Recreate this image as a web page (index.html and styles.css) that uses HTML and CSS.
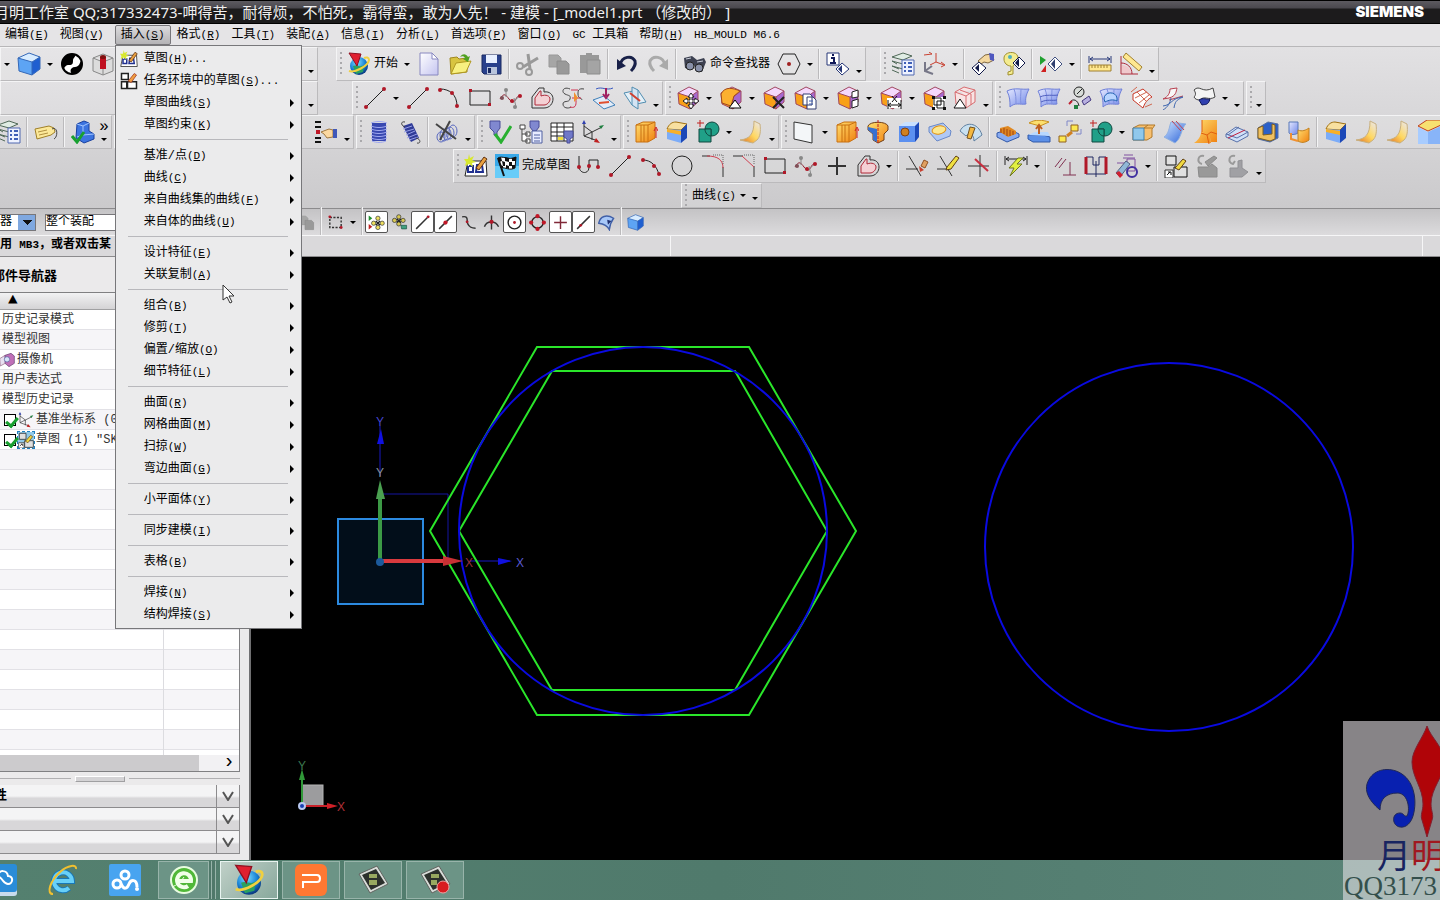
FILE: index.html
```
<!DOCTYPE html>
<html lang="zh-CN">
  <head>
    <meta charset="utf-8" />
    <title>建模 - [_model1.prt （修改的） ]</title>
    <link rel="stylesheet" href="styles.css">
  </head>

  <body>
    <!-- icon sprite -->
    <svg class="sprite" aria-hidden="true">
      <defs>
        <linearGradient id="g-blue" x1="0" y1="0" x2="1" y2="1"><stop offset="0" stop-color="#cfe4ff" /><stop offset="1" stop-color="#2a62d8" /></linearGradient>
        <linearGradient id="g-lilac" x1="0" y1="0" x2="1" y2="1"><stop offset="0" stop-color="#e4e8ff" /><stop offset="1" stop-color="#6f86e8" /></linearGradient>
        <linearGradient id="g-orange" x1="0" y1="0" x2="1" y2="1"><stop offset="0" stop-color="#ffe070" /><stop offset="1" stop-color="#f08010" /></linearGradient>
        <linearGradient id="g-sheet" x1="0" y1="1" x2="1" y2="0"><stop offset="0" stop-color="#e06a20" /><stop offset="0.5" stop-color="#ffd860" /><stop offset="1" stop-color="#e8e8f8" /></linearGradient>
        <linearGradient id="g-doc" x1="0" y1="0" x2="1" y2="1"><stop offset="0" stop-color="#ffffff" /><stop offset="1" stop-color="#c4c4f0" /></linearGradient>
        <radialGradient id="g-globe" cx="0.4" cy="0.3" r="0.7"><stop offset="0" stop-color="#7fe0ff" /><stop offset="0.6" stop-color="#1b86d8" /><stop offset="1" stop-color="#0a3a80" /></radialGradient>
      </defs>

      <symbol id="cube" viewBox="0 0 24 24"><path d="M1 6 12 1l11 4-8 5z" fill="#d8ecff" /><path d="M1 6l14 4v13L2 19z" fill="#5da4f4" /><path d="M15 10l8-5v12l-8 6z" fill="#1f5fd0" /><path d="M1 6 12 1l11 4v12l-8 6-13-4zM1 6l14 4 8-5M15 10v13" fill="none" stroke="#3468b8" /></symbol>
      <symbol id="shade" viewBox="0 0 24 24"><circle cx="12" cy="12" r="10" fill="#fff" stroke="#000" stroke-width="2" /><path d="M4 18A10 10 0 0 1 14 2c4 1-1 4-1 6 0 3 0 5-4 5-3 0-5 2-5 5zM12 22c-3-3-1-7 3-7s5-4 6-7c2 7-1 13-9 14z" fill="#000" /></symbol>
      <symbol id="cyl" viewBox="0 0 24 24"><path d="M2 6l10-4 10 4v13l-10 4-10-4zM2 6l10 4 10-4M12 10v13" fill="#dcdcdc" stroke="#888" /><path d="M9 5h6v12H9z" fill="#c01020" /><ellipse cx="12" cy="5" rx="3" ry="2" fill="#801010" /></symbol>
      <symbol id="nx" viewBox="0 0 24 24"><circle cx="12" cy="14" r="9" fill="url(#g-globe)" /><path d="M6 14c4-2 7 2 11-1l-1 7-7 2z" fill="#2aa060" /><path d="M2 19c6 2 19-5 20-11 0-3-3-3-5-2" fill="none" stroke="#f0d040" stroke-width="2" /><path d="M2 1l12 1-4 12z" fill="#e02030" stroke="#901020" /></symbol>
      <symbol id="new" viewBox="0 0 24 24"><path d="M3 1h12l6 6v16H3z" fill="url(#g-doc)" stroke="#8888c0" /><path d="M15 1v6h6z" fill="#fff" stroke="#8888c0" /></symbol>
      <symbol id="open" viewBox="0 0 24 24"><path d="M2 6l7-1 2 2 8-1v14L3 22z" fill="#d8c440" stroke="#a08820" /><path d="M3 22l5-11 15-2-5 11z" fill="#f8f080" stroke="#b09820" /><path d="M12 5c3-4 6-3 8 0l2-1-2 6-5-3 2-1c-1-2-3-2-5-1z" fill="#50a020" /></symbol>
      <symbol id="save" viewBox="0 0 24 24"><path d="M3 3h19v19H5l-2-2z" fill="#28408c" stroke="#182860" /><path d="M7 3h11v8H7z" fill="#e8f0ff" /><path d="M8 15h10v7H8z" fill="#b8c4dc" /><path d="M9 16h3v5H9z" fill="#182860" /></symbol>
      <symbol id="cut" viewBox="0 0 24 24"><path d="M22 6 7 15M12 2l2 15" stroke="#999" stroke-width="3" /><circle cx="4" cy="14" r="3" fill="none" stroke="#999" stroke-width="2" /><circle cx="13" cy="20" r="3" fill="none" stroke="#999" stroke-width="2" /></symbol>
      <symbol id="copy" viewBox="0 0 24 24"><path d="M2 3h9l3 3v9H2z" fill="#a6a6a6" stroke="#999" /><path d="M10 9h9l3 3v10H10z" fill="#999" stroke="#8c8c8c" /></symbol>
      <symbol id="paste" viewBox="0 0 24 24"><path d="M2 3h6V1h6v2h7v18H2z" fill="#999" /><path d="M9 8h13v14H9z" fill="#a4a4a4" stroke="#8c8c8c" /></symbol>
      <symbol id="undo" viewBox="0 0 24 24"><path d="M5 13C7 4 17 3 20 9c1 4-1 7-4 10" fill="none" stroke="#182048" stroke-width="3" /><path d="M2 7v11l9-4z" fill="#182048" /></symbol>
      <symbol id="redo" viewBox="0 0 24 24"><path d="M19 13C17 4 7 3 4 9c-1 4 1 7 4 10" fill="none" stroke="#aaa" stroke-width="3" /><path d="M22 7v11l-9-4z" fill="#aaa" /></symbol>
      <symbol id="find" viewBox="0 0 24 24"><path d="M1 6l8-2 5 4 7-2 2 4-4 10-6-1-2-6-4 4-5-1z" fill="#3c4050" /><circle cx="7" cy="14" r="4" fill="#8890a8" stroke="#222" /><circle cx="16" cy="16" r="4" fill="#8890a8" stroke="#222" /><path d="M3 7l5-1M14 10l6-1" stroke="#c8ccd8" /></symbol>
      <symbol id="hexagon" viewBox="0 0 24 24"><path d="M6 2h12l5 10-5 10H6L1 12z" fill="none" stroke="#222" /><circle cx="12" cy="12" r="2" fill="#a02020" /></symbol>
      <symbol id="info" viewBox="0 0 24 24"><path d="M1 1h12v12H1z" fill="#fff" stroke="#283878" /><path d="M5 6h3v5M4 11h6M6 3h2" stroke="#101858" stroke-width="2" fill="none" /><path d="M16 11l7 6-7 6-6-6z" fill="#fff" stroke="#283878" /><path d="M16 13v8l-4-4z" fill="#283878" /></symbol>
      <symbol id="layers" viewBox="0 0 24 24"><path d="M1 5l11-4 9 3-9 4zM1 9l5 3M1 14l7 3M1 18l7 3" fill="#e0ece4" stroke="#506858" /><path d="M1 9l11 3 8-3M1 14l11 3" fill="none" stroke="#506858" /><path d="M11 8h12v15H11z" fill="#eef2ff" stroke="#5068b0" /><path d="M13 11h2M17 11h4M13 15h2M17 15h4M13 19h2M17 19h4" stroke="#4060b8" stroke-width="2" /></symbol>
      <symbol id="wcs" viewBox="0 0 24 24"><path d="M14 1v9l8 3M14 10l-6 3M2 3l8-1-3-2M19 10l4 3-4 2" fill="none" stroke="#c84030" /><path d="M3 10v9l8 3M3 19l7-5" fill="none" stroke="#777788" stroke-width="2" /></symbol>
      <symbol id="hand" viewBox="0 0 24 24"><path d="M7 9l7-6 6-1 3 6-6 3-4-1-3 2z" fill="#f4d8a0" stroke="#806840" /><path d="M18 1l5 1v7l-4-1z" fill="#5058c0" /><path d="M8 10l7 6-7 7-7-7z" fill="#fff" stroke="#101848" /><path d="M8 12v8l-4-4z" fill="#101848" /></symbol>
      <symbol id="key" viewBox="0 0 24 24"><path d="M2 7c-1-8 14-9 14-1 0 5-4 6-5 8v8l-5 1v-3l3-1v-5C5 14 2 11 2 7z" fill="#f4ec90" stroke="#a09030" /><circle cx="8" cy="5" r="2" fill="#50b0c0" /><path d="M17 5l6 6-6 6-6-6z" fill="#fff" stroke="#101848" /><path d="M17 6v9l-4-4z" fill="#101848" /></symbol>
      <symbol id="reverse" viewBox="0 0 24 24"><path d="M1 4v9l6-5z" fill="#20a030" /><path d="M2 20l5-7v7z" fill="#d02020" /><path d="M16 5l7 7-7 7-7-7z" fill="#fff" stroke="#405080" /><path d="M16 7v10l-4-5z" fill="#304070" /></symbol>
      <symbol id="ruler" viewBox="0 0 24 24"><path d="M1 13h22v6H1z" fill="#ffe890" stroke="#a08030" /><path d="M4 13v3M7 13v3M10 13v3M13 13v3M16 13v3M19 13v3" stroke="#a08030" /><path d="M1 4v7M23 4v7M2 7h20M5 5L2 7l3 2M19 5l3 2-3 2" stroke="#283878" fill="none" /></symbol>
      <symbol id="angle" viewBox="0 0 24 24"><path d="M2 4v18h17M2 11c6 0 11 4 11 11" fill="none" stroke="#b02838" /><path d="M3 13c5 0 9 4 9 8H3z" fill="#f0c8cc" /><path d="M7 1l16 14-3 4L4 5z" fill="#ffe890" stroke="#a08030" /></symbol>

      <symbol id="line" viewBox="0 0 24 24"><path d="M3 21 21 3" stroke="#222" /><circle cx="3" cy="21" r="2" fill="#b01828" /><circle cx="21" cy="3" r="2" fill="#b01828" /></symbol>
      <symbol id="arc" viewBox="0 0 24 24"><path d="M3 3c10 0 17 6 17 17" fill="none" stroke="#222" /><circle cx="3" cy="4" r="2" fill="#b01828" /><circle cx="15" cy="7" r="2" fill="#b01828" /><circle cx="20" cy="20" r="2" fill="#b01828" /></symbol>
      <symbol id="rect" viewBox="0 0 24 24"><path d="M2 5h20v14H2z" fill="none" stroke="#222" /><path d="M1 3h3v3H1zM20 17h3v3h-3z" fill="#b01828" /></symbol>
      <symbol id="spline" viewBox="0 0 24 24"><path d="M1 13C5 6 7 9 10 13s5 4 7 0 3-3 5-3" fill="none" stroke="#902030" /><path d="M7 3v8M15 12l2 9M16 14l6-5" stroke="#888" /><circle cx="7" cy="4" r="2" fill="#888" /><circle cx="16" cy="21" r="2" fill="#888" /><circle cx="13" cy="15" r="2" fill="#b01828" /><circle cx="3" cy="12" r="2" fill="#805058" /><circle cx="21" cy="10" r="2" fill="#b01828" /></symbol>
      <symbol id="offset" viewBox="0 0 24 24"><path d="M2 22V11l7-9h5v4c6-1 9 3 9 7s-3 9-9 9z" fill="none" stroke="#333" /><path d="M5 19v-7l5-7h1v5c5-2 9 0 9 3s-3 6-6 6z" fill="#f4d0d4" stroke="#b02838" /></symbol>
      <symbol id="bridge" viewBox="0 0 24 24"><path d="M9 3C2 0 0 6 4 8s6 1 5 5-7 1-7 5 5 5 8 3M23 3c-6-1-6 2-6 5 0 5 4 4 4 6" fill="none" stroke="#444" /><path d="M10 4h7M9 21c7 2 6-4 6-8M11 12h9" fill="none" stroke="#d03050" /><path d="M13 6l4 6-4 4z" fill="#f09030" /></symbol>
      <symbol id="project" viewBox="0 0 24 24"><path d="M1 14l11-4 11 9-11 4z" fill="#e4ecf8" stroke="#4080b8" /><path d="M7 17l10-1" stroke="#e05030" stroke-width="2" /><path d="M4 3c6-3 10 2 17-1" fill="none" stroke="#3858c0" /><path d="M14 2v8M11 8l3 4 3-4" fill="none" stroke="#a02060" stroke-width="2" /></symbol>
      <symbol id="planes" viewBox="0 0 24 24"><path d="M1 7l14-3 8 12-14 3z" fill="#e4f0f8" stroke="#508cb0" /><path d="M9 1l6 3v19l-6-4z" fill="#d4e4f4" stroke="#508cb0" /><path d="M7 7l10 8" stroke="#d04030" stroke-width="2" /></symbol>

      <symbol id="cubeo" viewBox="0 0 24 24"><path d="M2 7l11-6 9 4-8 6z" fill="#f4d8fc" /><path d="M2 7l12 4v12L3 18z" fill="#f8a018" /><path d="M14 11l8-6v11l-8 7z" fill="#a868d0" /><path d="M2 7l11-6 9 4v11l-8 7-11-5zM2 7l12 4 8-6M14 11v12" fill="none" stroke="#a04860" /></symbol>
      <symbol id="c-move" viewBox="0 0 24 24"><use href="#cubeo" /><path d="M15 7l3 4h-2v3h3v-2l4 3-4 3v-2h-3v3h2l-3 4-3-4h2v-3h-3v2l-4-3 4-3v2h3v-3h-2z" fill="#fff" stroke="#222" /></symbol>
      <symbol id="c-edit" viewBox="0 0 24 24"><use href="#cubeo" /><path d="M2 8C6 0 14 2 21 5l-6 5-3 10-9-3z" fill="#fcb030" stroke="#a04820" /><path d="M16 14l6 8H10z" fill="#fff" stroke="#000" /></symbol>
      <symbol id="c-del" viewBox="0 0 24 24"><use href="#cubeo" /><path d="M11 11l11 11M22 11 11 22" stroke="#222" stroke-width="2" /></symbol>
      <symbol id="c-copy" viewBox="0 0 24 24"><use href="#cubeo" /><path d="M10 8h7l2 2v9h-9zM14 11h6l3 3v9h-9z" fill="#fff" stroke="#333c70" /><path d="M16 15h4M16 18h4" stroke="#4060b0" /></symbol>
      <symbol id="c-pat" viewBox="0 0 24 24"><use href="#cubeo" /><path d="M16 6l6-2v7l-6 1zM16 15l6-2v7l-6 2z" fill="#fff" stroke="#222" /></symbol>
      <symbol id="c-dim" viewBox="0 0 24 24"><use href="#cubeo" /><path d="M8 12h14v10H8z" fill="#fff" /><path d="M9 14v9M22 14v9M9 19h13M12 17l-3 2 3 2M19 17l3 2-3 2M13 10l5 6M18 10l-5 6" fill="none" stroke="#111" /></symbol>
      <symbol id="c-group" viewBox="0 0 24 24"><use href="#cubeo" /><path d="M11 11h12v12H11z" fill="#fff" /><path d="M12 12h7v7h-7zM15 15h7v7h-7z" fill="none" stroke="#111" /><path d="M10 10h3v3h-3zM21 21h3v3h-3zM10 21h3v3h-3zM21 10h3v3h-3z" fill="#111" /></symbol>
      <symbol id="c-wire" viewBox="0 0 24 24"><path d="M2 6l9-5 11 3v12l-9 6L3 18zM2 6l11 4 9-6M13 10v12M7 4l11 4v11" fill="#f8e4e4" stroke="#d86c70" /><path d="M7 13l6 9H1z" fill="#fff" stroke="#111" /></symbol>
      <symbol id="surf1" viewBox="0 0 24 24"><path d="M1 5c8-4 14-1 22-2-3 6-4 10-3 15-6 1-11-2-16 3 0-6 0-10-3-16z" fill="url(#g-lilac)" stroke="#7080d8" /><path d="M8 3c2 5 2 10 2 15M15 3c0 5-1 10 0 15" fill="none" stroke="#8090e0" /></symbol>
      <symbol id="surf2" viewBox="0 0 24 24"><use href="#surf1" /><path d="M3 11c6-3 13-1 18-2M4 16c6-3 11-1 16-2" fill="none" stroke="#5060c0" /></symbol>
      <symbol id="analyse" viewBox="0 0 24 24"><circle cx="11" cy="6" r="5" fill="#d8dcd8" stroke="#222" /><path d="M9 8l5-5" stroke="#222" /><path d="M2 16c3-4 8-2 9 4" fill="none" stroke="#222" /><path d="M6 19h4v4H6z" fill="#208040" /><path d="M1 18l3-3" stroke="#c02030" stroke-width="2" /><path d="M14 15l7-5 2 4-7 5z" fill="#b8b0e0" stroke="#443880" /></symbol>
      <symbol id="patch" viewBox="0 0 24 24"><use href="#surf1" /><path d="M5 13c0-8 12-8 13-1v3c-4-2-8-1-12 1z" fill="#b8d4ff" stroke="#2060b0" /></symbol>
      <symbol id="mesh" viewBox="0 0 24 24"><path d="M3 8l10-5 9 8c-4 2-7 5-9 11L3 14z" fill="#fff" stroke="#c83828" /><path d="M7 6l10 10M5 12l12-6M9 17l10-8M1 6l6-5M15 21l7-3" fill="none" stroke="#d06850" /></symbol>
      <symbol id="sweep" viewBox="0 0 24 24"><path d="M9 3l7-1c-1 4-1 8-8 10l-6 1c5-2 7-6 7-10zM8 14l14-4" fill="#f8f8f8" stroke="#b84050" /><path d="M2 20c9-1 8-8 20-9-7 3-8 5-9 11M10 12c-1 5-3 9-8 12" fill="none" stroke="#4068b0" /></symbol>
      <symbol id="ribbon" viewBox="0 0 24 24"><path d="M2 4c6-6 8 4 19-2l2 9c-6 4-11-2-15 3-3 0-5-1-6-3 2-2 2-4 0-7z" fill="#f4f4f4" stroke="#444" /><path d="M7 14c4-3 8 0 11-1-2 7-5 5-8 6z" fill="#3040b0" stroke="#101858" /></symbol>

      <symbol id="tag" viewBox="0 0 24 24"><path d="M1 9l14-3 5 2 1 4-4 3-14 4z" fill="#fce898" stroke="#a08028" /><path d="M4 12l9-2M5 15l9-2" stroke="#b09040" /><path d="M18 9c6-3 6 8 2 10" fill="none" stroke="#444" /></symbol>
      <symbol id="check-block" viewBox="0 0 24 24"><path d="M6 4l7-3 5 2v8l5 3v5l-10 4-8-5z" fill="#3c74e0" stroke="#1840a0" /><path d="M6 4l6 2v9l-6 2M12 6l6-3M12 15l11-1" fill="none" stroke="#a0c4ff" /><path d="M1 16l5 6 7-10" fill="none" stroke="#18a030" stroke-width="3" /></symbol>
      <symbol id="pick" viewBox="0 0 24 24"><path d="M1 2h6M1 7h6M1 18h6M1 22h6" stroke="#111" stroke-width="2" /><path d="M2 10h4v4H2z" fill="#c01828" /><path d="M7 12l8-3 4 1v7l-6 1-3-4z" fill="#fbd8a0" stroke="#a07840" /><path d="M19 9h4v9h-4z" fill="#4058b8" /></symbol>
      <symbol id="coil" viewBox="0 0 24 24"><path d="M5 3h14v18H5z" fill="#3848b0" /><path d="M4 3c5-2 11-2 16 0M4 6c5 2 11 2 16 0M4 9c5 2 11 2 16 0M4 12c5 2 11 2 16 0M4 15c5 2 11 2 16 0M4 18c5 2 11 2 16 0M5 21c5 2 9 2 14 0" fill="none" stroke="#a0a8f0" /></symbol>
      <symbol id="spring" viewBox="0 0 24 24"><path d="M5 6l9-3 7 15-8 4z" fill="#303c98" /><path d="M5 9l9-3M6 12l10-3M8 15l9-4M9 18l10-4M11 20l9-3" stroke="#98a0e8" /><path d="M7 7C2 5 3 1 7 2M18 18c5 1 5 6 1 5" fill="none" stroke="#444" /></symbol>
      <symbol id="nospring" viewBox="0 0 24 24"><g fill="none" stroke="#5868c0"><ellipse cx="6" cy="17" rx="4" ry="5" /><ellipse cx="9" cy="15" rx="4" ry="6" /><ellipse cx="12" cy="14" rx="4" ry="6" /><ellipse cx="15" cy="13" rx="4" ry="6" /><ellipse cx="18" cy="11" rx="4" ry="6" /></g><path d="M1 4l20 15M15 1L5 20" stroke="#444" stroke-width="2" /></symbol>
      <symbol id="vcheck" viewBox="0 0 24 24"><path d="M2 1h10v7l-3 4v3H6v-3L2 8z" fill="#8088d0" stroke="#484c98" /><path d="M7 14l6 8L23 6" fill="none" stroke="#28b030" stroke-width="3" /></symbol>
      <symbol id="vtree" viewBox="0 0 24 24"><path d="M11 1h9v6l-3 4h-3l-3-4z" fill="#8088d0" stroke="#484c98" /><path d="M13 11h10v12H13z" fill="#e8ecff" stroke="#5060a0" /><path d="M1 5h5v4H1zM3 9v12h6M3 14h6M7 12h4v4H7zM7 19h4v4H7z" fill="#fff" stroke="#444" /><path d="M15 15h6M15 18h6M15 21h6" stroke="#5060a0" /></symbol>
      <symbol id="vtable" viewBox="0 0 24 24"><path d="M1 3h22v18H1z" fill="#fff" /><path d="M1 3h22v18H1zM1 7h22M1 12h22M1 16h22M7 3v18M14 3v18" fill="none" stroke="#222" /><path d="M14 11h9v6l-3 2v4h-3v-4l-3-2z" fill="#7078c8" stroke="#484c98" /><path d="M8 17h5v3H8z" fill="#f0e040" /></symbol>
      <symbol id="axes" viewBox="0 0 24 24"><path d="M3 2v14l14 5M3 16l18-9M3 6l8 6v8" fill="none" stroke="#333" /><path d="M1 4l2-4 2 4z" fill="#3040b0" /><path d="M18 6l5-1-3 4z" fill="#208040" /><path d="M15 18l4 5-6-1z" fill="#c02020" /></symbol>
      <symbol id="extrude" viewBox="0 0 24 24"><path d="M2 5l7-3h12v16l-7 4H2z" fill="url(#g-orange)" stroke="#c87010" /><path d="M2 5h12v17M14 5l7-3M7 5v17M10 5v17" fill="none" stroke="#c87010" /><path d="M22 18V9M20 11l2-4 2 4" stroke="#d02020" fill="none" /></symbol>
      <symbol id="block" viewBox="0 0 24 24"><path d="M2 9c2-5 5-7 9-7l11 2-6 6z" fill="#f8e0a0" stroke="#a07010" /><path d="M2 9l14 1v13L2 19z" fill="#7cacf8" /><path d="M16 10l6-6v14l-6 5z" fill="#1c48b8" /><path d="M2 9l14 2v4L2 12z" fill="#f8b028" /></symbol>
      <symbol id="unite" viewBox="0 0 24 24"><circle cx="16" cy="9" r="7" fill="#20a088" stroke="#104840" /><path d="M3 9h12v13H3z" fill="#20a088" stroke="#104840" /><path d="M15 9v7c-3 0-6-3-6-7z" fill="#20a088" stroke="#104840" /><path d="M4 0v7M1 3h7" stroke="#c02020" /></symbol>
      <symbol id="sheet" viewBox="0 0 24 24"><path d="M15 1l6 3c1 8 0 13-3 16l-4 3-13-3c9-1 14-5 14-19z" fill="url(#g-sheet)" stroke="#c8b080" /></symbol>
      <symbol id="plane" viewBox="0 0 24 24"><path d="M2 2l18 3v18L2 19z" fill="#f4f6f8" stroke="#333" /></symbol>
      <symbol id="revolve" viewBox="0 0 24 24"><path d="M2 6c2-5 18-5 20 0v4l-4 4v6l-6 3-5-3v-6l-5-4z" fill="url(#g-orange)" stroke="#704018" /><path d="M2 7l9 2v13l-4-2v-6l-5-4z" fill="#3870d0" /><path d="M12 0v24" stroke="#c02020" stroke-dasharray="3 1" /></symbol>
      <symbol id="hole" viewBox="0 0 24 24"><path d="M2 6l6-4h14l-4 4z" fill="#c8e0ff" /><path d="M2 6h16v16H2z" fill="#5c90f0" /><path d="M18 6l4-4v15l-4 5z" fill="#1c48b8" /><circle cx="8" cy="12" r="4" fill="#d08020" stroke="#804010" /></symbol>
      <symbol id="boss" viewBox="0 0 24 24"><path d="M1 7l14-4 8 8-1 5-13 5-8-9z" fill="#b0c8f4" stroke="#6888c8" /><ellipse cx="11" cy="10" rx="7" ry="4" transform="rotate(-10 11 10)" fill="#fce890" stroke="#e09010" /></symbol>
      <symbol id="arcface" viewBox="0 0 24 24"><path d="M1 11C6 1 19 2 23 15l-8 6c0-7-5-9-8-5z" fill="#c8e0f0" stroke="#6080a0" /><path d="M11 7l5 1-4 11-4-1z" fill="#f4b840" stroke="#705020" /></symbol>
      <symbol id="emboss" viewBox="0 0 24 24"><path d="M1 13l12-4 10 5v3l-12 5-10-5z" fill="#88aaf0" stroke="#3058a8" /><path d="M4 8l8-2 8 5v3l-8 3-8-5z" fill="#e08820" /><path d="M5 9v4M8 8v6M11 9v7M14 10v6M17 11v4" stroke="#a04010" /></symbol>
      <symbol id="pad" viewBox="0 0 24 24"><path d="M1 15h15l7 2v5H6l-5-3z" fill="#5c90e8" stroke="#3058a8" /><path d="M1 15l7-3h13l2 4z" fill="#b8d8ff" /><path d="M2 3c6-4 14-3 20-1l-9 4z" fill="#fce070" stroke="#c89020" /><path d="M12 14V6M9 9l3-4 3 4" fill="none" stroke="#c06020" stroke-width="2" /></symbol>
      <symbol id="instance" viewBox="0 0 24 24"><path d="M13 5h7v6h-7zM1 16h7v6H1z" fill="#fce850" stroke="#906020" /><path d="M9 16l5-4" stroke="#d08020" stroke-width="3" /><path d="M9 6V1h6M18 14h5V9" fill="none" stroke="#8088c8" /></symbol>
      <symbol id="split" viewBox="0 0 24 24"><path d="M1 8l6-3h16l-3 4v8l-5 3H1z" fill="#f8c070" stroke="#b07828" /><path d="M1 8h11v12H1z" fill="#90c8ec" stroke="#4080b0" /><path d="M12 8h8M12 8l4-3" stroke="#b07828" /></symbol>
      <symbol id="bend" viewBox="0 0 24 24"><path d="M8 2l15 2c-5 4-4 14-11 19L1 17c5-3 5-10 7-15z" fill="url(#g-blue)" stroke="#90b0e0" /><path d="M9 1l9 10M13 1l8 9" stroke="#c04050" /></symbol>
      <symbol id="pipe" viewBox="0 0 24 24"><path d="M8 0h15v22h-6l-2-8 2 9H0c4-3 6-5 7-10l1-2z" fill="url(#g-orange)" /><path d="M7 13l6 2 4-3 6 2M13 15l2 9M8 0v12" fill="none" stroke="#e06010" /></symbol>
      <symbol id="sew" viewBox="0 0 24 24"><path d="M1 14l10-7 12 5v4l-11 6-11-5z" fill="#d0e0f8" stroke="#5870a8" /><path d="M3 15l11-8M1 14l11 4 11-6" fill="none" stroke="#5870a8" /><path d="M3 18l17-8" stroke="#c02040" /></symbol>
      <symbol id="cavity" viewBox="0 0 24 24"><path d="M2 8l10-6 10 2v14l-8 4-12-3z" fill="#2c60c8" stroke="#5870a0" /><path d="M2 8l5-2v9l9-1V4l3 1v14l-5 2-12-3z" fill="#f0c060" stroke="#806020" /></symbol>
      <symbol id="tubes" viewBox="0 0 24 24"><path d="M2 2h9v11c-3 2-7 2-9 0z" fill="url(#g-lilac)" stroke="#5878b8" /><path d="M11 10c4 2 8 0 11-2v12c-4 3-8 3-11 1z" fill="url(#g-orange)" stroke="#c08020" /><path d="M4 13v6l7 2" fill="none" stroke="#f09030" stroke-width="2" /></symbol>
      <symbol id="chamferb" viewBox="0 0 24 24"><path d="M1 7l10 5v12H1z" fill="#a8ccff" /><path d="M11 12l13-6v18H11z" fill="#88b4f8" /><path d="M1 6l9-6h14v5l-13 6z" fill="#f8e070" stroke="#c04020" /></symbol>

      <symbol id="sketch" viewBox="0 0 24 24"><path d="M4 7h18l1 15H1z" fill="#fff" stroke="#222" /><path d="M5 12h4v6H4v-6M12 18l1-7h5l1 7z" fill="none" stroke="#203090" stroke-width="2" /><path d="M12 14l8-11 3 2-8 11z" fill="#e8a040" stroke="#603010" /><path d="M5 0l1 4 4-2-2 4 4 2-4 1 1 4-4-3-4 2 1-4-2-3 4 0z" fill="#d8e830" /></symbol>
      <symbol id="tasksketch" viewBox="0 0 24 24"><path d="M2 2h9v8H2zM2 13h7v9H2zM10 13h12v9H10z" fill="#fff" stroke="#222" stroke-width="2" /><path d="M11 12l8-10 3 2-7 10z" fill="#f0a040" stroke="#a03020" /></symbol>
      <symbol id="flag" viewBox="0 0 24 24"><path d="M0 0h24v24H0z" fill="#38a8e8" /><path d="M0 12h24v12H0z" fill="#68ccf8" /><path d="M3 4c5-3 10 3 18-1l-1 11c-6 3-9-1-14 0z" fill="#fff" stroke="#111" /><path d="M3 4l3-1 1 4-3 1zM10 3l4 1v4l-4-1zM17 4l4-1v4h-4zM7 7l3 1v4H8zM14 8h3v4h-3zM5 11l3 1v2H6zM11 11l3 1v3l-3-1zM17 11h3v3l-3 1z" fill="#111" /><path d="M3 4l6 18" stroke="#111" stroke-width="2" /></symbol>
      <symbol id="profile" viewBox="0 0 24 24"><path d="M2 2v10c0 8 10 9 10 1V6h9v7" fill="none" stroke="#222" /><circle cx="2" cy="13" r="2" fill="#b01828" /><circle cx="12" cy="12" r="2" fill="#b01828" /><circle cx="21" cy="13" r="2" fill="#b01828" /></symbol>
      <symbol id="arc2" viewBox="0 0 24 24"><path d="M4 6c8 0 14 6 16 15" fill="none" stroke="#222" /><circle cx="4" cy="6" r="2" fill="#b01828" /><circle cx="15" cy="12" r="2" fill="#b01828" /><circle cx="20" cy="20" r="2" fill="#b01828" /></symbol>
      <symbol id="circle" viewBox="0 0 24 24"><circle cx="12" cy="12" r="10" fill="none" stroke="#222" /></symbol>
      <symbol id="fillet" viewBox="0 0 24 24"><path d="M1 2h8M22 13v10" stroke="#333" /><path d="M6 2c11 0 16 4 16 12" fill="none" stroke="#d04050" /><path d="M12 1h10v10" fill="none" stroke="#666" stroke-dasharray="1 1" /></symbol>
      <symbol id="chamfer" viewBox="0 0 24 24"><path d="M1 2h10M22 12v11" stroke="#333" /><path d="M10 2l12 11" stroke="#d04050" /><path d="M12 1h10v10" fill="none" stroke="#666" stroke-dasharray="1 1" /></symbol>
      <symbol id="plus" viewBox="0 0 24 24"><path d="M12 3v18M3 12h18" stroke="#333" stroke-width="2" /></symbol>
      <symbol id="trim" viewBox="0 0 24 24"><path d="M4 2l12 20M1 15h12" stroke="#333" fill="none" /><path d="M16 12l3-6 4 2-3 6z" fill="#e0a060" stroke="#905020" /><path d="M14 12l5 4-4 2z" fill="#c84030" /></symbol>
      <symbol id="extend" viewBox="0 0 24 24"><path d="M4 2l12 20M1 15h9" stroke="#333" fill="none" /><path d="M11 13l9-11 3 2-8 11-5 1z" fill="#f0e040" stroke="#604010" /></symbol>
      <symbol id="corner" viewBox="0 0 24 24"><path d="M13 1v22M1 12h21" stroke="#333" /><path d="M8 5l13 12" stroke="#c83040" stroke-width="2" /></symbol>
      <symbol id="rapid" viewBox="0 0 24 24"><path d="M1 2v9M23 2v9M2 5h20M5 3L2 5l3 2M19 3l3 2-3 2" fill="none" stroke="#222" /><path d="M14 4L5 14h5l-4 8 12-12h-5l6-6z" fill="#e0f040" stroke="#707820" /></symbol>
      <symbol id="constrain" viewBox="0 0 24 24"><path d="M2 13l7-9M6 14l7-9M17 8v13M10 21h13" fill="none" stroke="#803050" /></symbol>
      <symbol id="mirror" viewBox="0 0 24 24"><path d="M9 3v8h6V3M12 7v16" fill="none" stroke="#202860" /><path d="M9 3H2v17h20V3h-7" fill="none" stroke="#202860" /><path d="M2 3v17M22 3v17" stroke="#b01828" stroke-width="3" /></symbol>
      <symbol id="convert" viewBox="0 0 24 24"><path d="M12 5h8v12h-8zM2 9h10M9 1h9M8 4h12" fill="none" stroke="#8050a0" /><circle cx="17" cy="18" r="5" fill="none" stroke="#4030a0" stroke-width="2" /><path d="M1 19l10-12 4 3L5 23z" fill="#90b8d8" stroke="#506080" /><path d="M1 19l3-2 4 4-3 3z" fill="#d02030" /></symbol>
      <symbol id="linksketch" viewBox="0 0 24 24"><path d="M2 2h10v9H2zM10 13h13v10H10z" fill="#e0e0e0" stroke="#111" /><path d="M1 16h8v8H1z" fill="#fff" stroke="#333" /><path d="M3 21l3-3M4 18h3v3" fill="none" stroke="#111" /><path d="M11 14l8-9 3 2-7 9z" fill="#f0d840" stroke="#604010" /></symbol>
      <symbol id="off1" viewBox="0 0 24 24"><path d="M9 2C3 0 1 9 7 10" fill="none" stroke="#999" stroke-width="2" /><path d="M10 8l9-6 3 2-9 8zM3 13h10l4-3 5 4v9H4z" fill="#999" stroke="#8a8a8a" /></symbol>
      <symbol id="off2" viewBox="0 0 24 24"><path d="M9 2C3 0 1 9 7 10l2-3" fill="none" stroke="#999" stroke-width="2" /><path d="M4 14h8V7l4-1v8l6 4-6 5H4z" fill="#a0a0a4" stroke="#909094" /></symbol>

      <symbol id="region" viewBox="0 0 24 24"><path d="M4 5h16v14H4z" fill="none" stroke="#333" stroke-width="2" stroke-dasharray="3 2" /><circle cx="4" cy="4" r="2" fill="#b01828" /><circle cx="20" cy="19" r="2" fill="#b01828" /></symbol>
      <symbol id="snapall" viewBox="0 0 24 24"><path d="M1 2v8l5-4z" fill="#209030" /><path d="M1 14v8l5-4z" fill="#c02020" /><g fill="#f0e060" stroke="#333"><circle cx="14" cy="6" r="3" /><circle cx="8" cy="13" r="3" /><circle cx="20" cy="13" r="3" /><circle cx="14" cy="19" r="3" /></g><path d="M11 10l6 6M17 10l-6 6" stroke="#222" stroke-width="2" /></symbol>
      <symbol id="snapoff" viewBox="0 0 24 24"><g fill="#d8c850" stroke="#333"><circle cx="11" cy="4" r="3" /><circle cx="5" cy="9" r="3" /><circle cx="17" cy="9" r="3" /><circle cx="11" cy="14" r="3" /></g><path d="M8 7l6 5M14 7l-6 5" stroke="#222" stroke-width="2" /><path d="M14 16h8v5h-7z" fill="#40a080" stroke="#205848" /></symbol>
      <symbol id="endpt" viewBox="0 0 24 24"><path d="M3 21 19 5" stroke="#333" stroke-width="2" /><circle cx="20" cy="4" r="2" fill="#b01828" /></symbol>
      <symbol id="midpt" viewBox="0 0 24 24"><path d="M3 21 21 3" stroke="#333" stroke-width="2" /><circle cx="12" cy="12" r="3" fill="#c01828" /></symbol>
      <symbol id="ctrlpt" viewBox="0 0 24 24"><path d="M3 4c10-2 6 6 8 10s4 6 11 6" fill="none" stroke="#333" stroke-width="2" /><circle cx="10" cy="11" r="2" fill="#b01828" /></symbol>
      <symbol id="inter" viewBox="0 0 24 24"><path d="M12 2v20M2 18c3-9 16-9 20 0" fill="none" stroke="#333" stroke-width="2" /><circle cx="12" cy="11" r="3" fill="#b01828" /></symbol>
      <symbol id="center" viewBox="0 0 24 24"><circle cx="12" cy="12" r="9" fill="none" stroke="#222" stroke-width="2" /><circle cx="12" cy="12" r="2" fill="#b01828" /></symbol>
      <symbol id="quad" viewBox="0 0 24 24"><circle cx="12" cy="12" r="8" fill="none" stroke="#222" stroke-width="2" /><g fill="#c01828"><circle cx="12" cy="3" r="3" /><circle cx="3" cy="12" r="3" /><circle cx="21" cy="12" r="3" /><circle cx="12" cy="21" r="3" /></g></symbol>
      <symbol id="point" viewBox="0 0 24 24"><path d="M12 3v18M3 12h18" stroke="#802838" stroke-width="2" /></symbol>
      <symbol id="oncurve" viewBox="0 0 24 24"><path d="M3 21 21 3" stroke="#333" stroke-width="2" /><circle cx="8" cy="16" r="2" fill="#b01828" /></symbol>
      <symbol id="onface" viewBox="0 0 24 24"><path d="M1 13C3 3 12 0 22 6c-3 4-5 8-6 16-3-6-8-8-15-9z" fill="#a8c8f8" stroke="#4060a8" stroke-width="2" /><path d="M13 8l6 2-5 5z" fill="#203070" /></symbol>
      <symbol id="camera" viewBox="0 0 24 24"><path d="M1 10l8-5 2 11-9 5z" fill="#e8e0f0" stroke="#906080" /><path d="M9 5l9-3 5 4v11l-8 5-6-5z" fill="#c070b8" stroke="#604070" /><circle cx="12" cy="11" r="4" fill="#d8e4f8" stroke="#5060a0" /></symbol>
    </svg>

    <header class="titlebar">
      <h1>月明工作室 QQ;317332473-呷得苦，耐得烦，不怕死，霸得蛮，敢为人先！ - 建模 - [_model1.prt （修改的） ]</h1>
      <span class="brand">SIEMENS</span>
    </header>

    <nav class="menubar">
      <button>编辑<kbd>(<u>E</u>)</kbd></button>
      <button>视图<kbd>(<u>V</u>)</kbd></button>
      <div class="menu-holder">
        <button class="open">插入<kbd>(<u>S</u>)</kbd></button>
        <div class="menu">
          <button><svg><use href="#sketch" /></svg>草图<kbd>(<u>H</u>)...</kbd></button>
          <button><svg><use href="#tasksketch" /></svg>任务环境中的草图<kbd>(<u>S</u>)...</kbd></button>
          <button class="sub">草图曲线<kbd>(<u>S</u>)</kbd></button>
          <button class="sub">草图约束<kbd>(<u>K</u>)</kbd></button>
          <hr>
          <button class="sub">基准/点<kbd>(<u>D</u>)</kbd></button>
          <button class="sub">曲线<kbd>(<u>C</u>)</kbd></button>
          <button class="sub">来自曲线集的曲线<kbd>(<u>F</u>)</kbd></button>
          <button class="sub">来自体的曲线<kbd>(<u>U</u>)</kbd></button>
          <hr>
          <button class="sub">设计特征<kbd>(<u>E</u>)</kbd></button>
          <button class="sub">关联复制<kbd>(<u>A</u>)</kbd></button>
          <hr>
          <button class="sub">组合<kbd>(<u>B</u>)</kbd></button>
          <button class="sub">修剪<kbd>(<u>T</u>)</kbd></button>
          <button class="sub">偏置/缩放<kbd>(<u>O</u>)</kbd></button>
          <button class="sub">细节特征<kbd>(<u>L</u>)</kbd></button>
          <hr>
          <button class="sub">曲面<kbd>(<u>R</u>)</kbd></button>
          <button class="sub">网格曲面<kbd>(<u>M</u>)</kbd></button>
          <button class="sub">扫掠<kbd>(<u>W</u>)</kbd></button>
          <button class="sub">弯边曲面<kbd>(<u>G</u>)</kbd></button>
          <hr>
          <button class="sub">小平面体<kbd>(<u>Y</u>)</kbd></button>
          <hr>
          <button class="sub">同步建模<kbd>(<u>I</u>)</kbd></button>
          <hr>
          <button class="sub">表格<kbd>(<u>B</u>)</kbd></button>
          <hr>
          <button class="sub">焊接<kbd>(<u>N</u>)</kbd></button>
          <button class="sub">结构焊接<kbd>(<u>S</u>)</kbd></button>
        </div>
      </div>
      <button>格式<kbd>(<u>R</u>)</kbd></button>
      <button>工具<kbd>(<u>T</u>)</kbd></button>
      <button>装配<kbd>(<u>A</u>)</kbd></button>
      <button>信息<kbd>(<u>I</u>)</kbd></button>
      <button>分析<kbd>(<u>L</u>)</kbd></button>
      <button>首选项<kbd>(<u>P</u>)</kbd></button>
      <button>窗口<kbd>(<u>O</u>)</kbd></button>
      <button><kbd>GC </kbd>工具箱</button>
      <button>帮助<kbd>(<u>H</u>)</kbd></button>
      <button><kbd>HB_MOULD M6.6</kbd></button>
    </nav>

    <div class="toolbars">
      <div class="row">
        <div class="bar docked">
          <button class="caret"></button>
          <button class="tool"><svg><use href="#cube" /></svg></button><button class="caret"></button>
          <button class="tool"><svg><use href="#shade" /></svg></button>
          <button class="tool"><svg><use href="#cyl" /></svg></button>
          <button class="caret more"></button>
        </div>
        <div class="bar standard">
          <i class="grip"></i>
          <button class="tool labelled"><svg><use href="#nx" /></svg>开始</button><button class="caret"></button>
          <button class="tool"><svg><use href="#new" /></svg></button>
          <button class="tool"><svg><use href="#open" /></svg></button>
          <button class="tool"><svg><use href="#save" /></svg></button>
          <i class="sep"></i>
          <button class="tool"><svg><use href="#cut" /></svg></button>
          <button class="tool"><svg><use href="#copy" /></svg></button>
          <button class="tool"><svg><use href="#paste" /></svg></button>
          <i class="sep"></i>
          <button class="tool"><svg><use href="#undo" /></svg></button>
          <button class="tool"><svg><use href="#redo" /></svg></button>
          <i class="sep"></i>
          <button class="tool labelled"><svg><use href="#find" /></svg>命令查找器</button>
          <button class="tool"><svg><use href="#hexagon" /></svg></button><button class="caret"></button>
          <i class="sep"></i>
          <button class="tool"><svg><use href="#info" /></svg></button>
          <button class="caret more"></button>
        </div>
        <div class="bar utility">
          <i class="grip"></i>
          <button class="tool"><svg><use href="#layers" /></svg></button>
          <button class="tool"><svg><use href="#wcs" /></svg></button><button class="caret"></button>
          <i class="sep"></i>
          <button class="tool"><svg><use href="#hand" /></svg></button>
          <button class="tool"><svg><use href="#key" /></svg></button>
          <i class="sep"></i>
          <button class="tool"><svg><use href="#reverse" /></svg></button><button class="caret"></button>
          <i class="sep"></i>
          <button class="tool"><svg><use href="#ruler" /></svg></button>
          <button class="tool"><svg><use href="#angle" /></svg></button>
          <button class="caret more"></button>
        </div>
      </div>

      <div class="row">
        <div class="bar docked">
          <button class="caret more"></button>
        </div>
        <div class="bar curve">
          <i class="grip"></i>
          <button class="tool"><svg><use href="#line" /></svg></button><button class="caret"></button>
          <button class="tool"><svg><use href="#line" /></svg></button>
          <button class="tool"><svg><use href="#arc" /></svg></button>
          <button class="tool"><svg><use href="#rect" /></svg></button>
          <button class="tool"><svg><use href="#spline" /></svg></button>
          <button class="tool"><svg><use href="#offset" /></svg></button>
          <button class="tool"><svg><use href="#bridge" /></svg></button>
          <button class="tool"><svg><use href="#project" /></svg></button>
          <button class="tool"><svg><use href="#planes" /></svg></button>
          <button class="caret more"></button>
        </div>
        <div class="bar">
          <i class="grip"></i>
          <button class="tool"><svg><use href="#c-move" /></svg></button><button class="caret"></button>
          <button class="tool"><svg><use href="#c-edit" /></svg></button><button class="caret"></button>
          <button class="tool"><svg><use href="#c-del" /></svg></button>
          <button class="tool"><svg><use href="#c-copy" /></svg></button><button class="caret"></button>
          <button class="tool"><svg><use href="#c-pat" /></svg></button><button class="caret"></button>
          <button class="tool"><svg><use href="#c-dim" /></svg></button><button class="caret"></button>
          <button class="tool"><svg><use href="#c-group" /></svg></button>
          <button class="tool"><svg><use href="#c-wire" /></svg></button>
          <button class="caret more"></button>
        </div>
        <div class="bar">
          <i class="grip"></i>
          <button class="tool"><svg><use href="#surf1" /></svg></button>
          <button class="tool"><svg><use href="#surf2" /></svg></button>
          <button class="tool"><svg><use href="#analyse" /></svg></button>
          <button class="tool"><svg><use href="#patch" /></svg></button>
          <button class="tool"><svg><use href="#mesh" /></svg></button>
          <button class="tool"><svg><use href="#sweep" /></svg></button>
          <button class="tool"><svg><use href="#ribbon" /></svg></button><button class="caret"></button>
          <button class="caret more"></button>
        </div>
        <div class="bar">
          <i class="grip"></i>
          <button class="caret more"></button>
        </div>
      </div>

      <div class="row">
        <div class="bar assembly">
          <button class="tool"><svg><use href="#layers" /></svg></button>
          <i class="sep"></i>
          <button class="tool"><svg><use href="#tag" /></svg></button>
          <i class="sep"></i>
          <button class="tool"><svg><use href="#check-block" /></svg></button>
          <button class="caret more overflow">»</button>
        </div>
        <div class="bar hidden-part">
          <button class="tool"><svg><use href="#pick" /></svg></button>
          <button class="caret more"></button>
        </div>
        <div class="bar">
          <i class="grip"></i>
          <button class="tool"><svg><use href="#coil" /></svg></button>
          <button class="tool"><svg><use href="#spring" /></svg></button>
          <i class="sep"></i>
          <button class="tool"><svg><use href="#nospring" /></svg></button>
          <button class="caret more"></button>
        </div>
        <div class="bar">
          <i class="grip"></i>
          <button class="tool"><svg><use href="#vcheck" /></svg></button>
          <button class="tool"><svg><use href="#vtree" /></svg></button>
          <button class="tool"><svg><use href="#vtable" /></svg></button>
          <button class="tool"><svg><use href="#axes" /></svg></button>
          <button class="caret more"></button>
        </div>
        <div class="bar">
          <i class="grip"></i>
          <button class="tool"><svg><use href="#extrude" /></svg></button>
          <button class="tool"><svg><use href="#block" /></svg></button>
          <button class="tool"><svg><use href="#unite" /></svg></button><button class="caret"></button>
          <button class="tool"><svg><use href="#sheet" /></svg></button>
          <button class="caret more"></button>
        </div>
        <div class="bar">
          <i class="grip"></i>
          <button class="tool"><svg><use href="#plane" /></svg></button><button class="caret"></button>
          <button class="tool"><svg><use href="#extrude" /></svg></button>
          <button class="tool"><svg><use href="#revolve" /></svg></button>
          <button class="tool"><svg><use href="#hole" /></svg></button>
          <button class="tool"><svg><use href="#boss" /></svg></button>
          <button class="tool"><svg><use href="#arcface" /></svg></button>
          <i class="sep"></i>
          <button class="tool"><svg><use href="#emboss" /></svg></button>
          <button class="tool"><svg><use href="#pad" /></svg></button>
          <button class="tool"><svg><use href="#instance" /></svg></button>
          <button class="tool"><svg><use href="#unite" /></svg></button><button class="caret"></button>
          <button class="tool"><svg><use href="#split" /></svg></button>
          <button class="tool"><svg><use href="#bend" /></svg></button>
          <button class="tool"><svg><use href="#pipe" /></svg></button>
          <button class="tool"><svg><use href="#sew" /></svg></button>
          <button class="tool"><svg><use href="#cavity" /></svg></button>
          <button class="tool"><svg><use href="#tubes" /></svg></button>
          <i class="sep"></i>
          <button class="tool"><svg><use href="#block" /></svg></button>
          <button class="tool"><svg><use href="#sheet" /></svg></button>
          <button class="tool"><svg><use href="#sheet" /></svg></button>
          <button class="tool"><svg><use href="#chamferb" /></svg></button>
        </div>
      </div>

      <div class="row">
        <div class="bar direct-sketch">
          <i class="grip"></i>
          <button class="tool"><svg><use href="#sketch" /></svg></button>
          <button class="tool labelled"><svg><use href="#flag" /></svg>完成草图</button>
          <button class="tool"><svg><use href="#profile" /></svg></button>
          <button class="tool"><svg><use href="#line" /></svg></button>
          <button class="tool"><svg><use href="#arc2" /></svg></button>
          <button class="tool"><svg><use href="#circle" /></svg></button>
          <button class="tool"><svg><use href="#fillet" /></svg></button>
          <button class="tool"><svg><use href="#chamfer" /></svg></button>
          <button class="tool"><svg><use href="#rect" /></svg></button>
          <button class="tool"><svg><use href="#spline" /></svg></button>
          <button class="tool"><svg><use href="#plus" /></svg></button>
          <button class="tool"><svg><use href="#offset" /></svg></button><button class="caret"></button>
          <i class="sep"></i>
          <button class="tool"><svg><use href="#trim" /></svg></button>
          <button class="tool"><svg><use href="#extend" /></svg></button>
          <button class="tool"><svg><use href="#corner" /></svg></button>
          <i class="sep"></i>
          <button class="tool"><svg><use href="#rapid" /></svg></button><button class="caret"></button>
          <i class="sep"></i>
          <button class="tool"><svg><use href="#constrain" /></svg></button>
          <button class="tool"><svg><use href="#mirror" /></svg></button>
          <button class="tool"><svg><use href="#convert" /></svg></button><button class="caret"></button>
          <i class="sep"></i>
          <button class="tool"><svg><use href="#linksketch" /></svg></button>
          <button class="tool"><svg><use href="#off1" /></svg></button>
          <button class="tool"><svg><use href="#off2" /></svg></button>
          <button class="caret more"></button>
        </div>
      </div>

      <div class="row last">
        <div class="bar curve-menu">
          <i class="grip"></i>
          <button class="text">曲线<kbd>(<u>C</u>)</kbd></button><button class="caret"></button>
          <button class="caret more"></button>
        </div>
      </div>
    </div>

    <div class="selection-bar">
      <div class="filters">
        <select class="filter" aria-label="类型过滤器"><option>器</option></select>
        <select class="scope" aria-label="选择范围"><option>整个装配</option></select>
      </div>
      <button class="snap"><svg><use href="#copy" /></svg></button>
      <i class="sep"></i>
      <button class="snap"><svg><use href="#region" /></svg></button><button class="caret"></button>
      <i class="sep"></i>
      <button class="snap on"><svg><use href="#snapall" /></svg></button>
      <button class="snap"><svg><use href="#snapoff" /></svg></button>
      <button class="snap on"><svg><use href="#endpt" /></svg></button>
      <button class="snap on"><svg><use href="#midpt" /></svg></button>
      <button class="snap"><svg><use href="#ctrlpt" /></svg></button>
      <button class="snap"><svg><use href="#inter" /></svg></button>
      <button class="snap on"><svg><use href="#center" /></svg></button>
      <button class="snap"><svg><use href="#quad" /></svg></button>
      <button class="snap on"><svg><use href="#point" /></svg></button>
      <button class="snap on"><svg><use href="#oncurve" /></svg></button>
      <button class="snap"><svg><use href="#onface" /></svg></button>
      <i class="sep"></i>
      <button class="snap"><svg><use href="#cube" /></svg></button>
    </div>

    <div class="prompt-bar">
      <p class="cue">用 <kbd>MB3</kbd>，或者双击某</p>
      <p class="status"></p>
      <p class="end"></p>
    </div>

    <main class="workspace">
      <aside class="navigator">
        <h2>部件导航器</h2>
        <div class="tree">
          <div class="tree-head">▲</div>
          <div class="tree-body">
            <table>
              <tr><td>历史记录模式</td></tr>
              <tr><td>模型视图</td></tr>
              <tr><td><svg><use href="#camera" /></svg>摄像机</td></tr>
              <tr><td>用户表达式</td></tr>
              <tr><td>模型历史记录</td></tr>
              <tr><td><label><input type="checkbox" checked><svg><use href="#axes" /></svg>基准坐标系 (0)</label></td></tr>
              <tr><td><label><input type="checkbox" checked><svg class="picked"><use href="#linksketch" /></svg>草图 (1) "SKETCH</label></td></tr>
            </table>
          </div>
          <div class="scrollbar"><span class="thumb"></span><span class="arrow">›</span></div>
        </div>
        <div class="splitter"><span></span></div>
        <button class="section"><b>性</b><svg viewBox="0 0 12 10"><path d="M1 1l5 8 5-8" /></svg></button>
        <button class="section"><b></b><svg viewBox="0 0 12 10"><path d="M1 1l5 8 5-8" /></svg></button>
        <button class="section"><b></b><svg viewBox="0 0 12 10"><path d="M1 1l5 8 5-8" /></svg></button>
      </aside>

      <section class="viewport">
        <svg viewBox="251 257 1189 603" preserveAspectRatio="xMinYMin meet">
          <!-- datum plane -->
          <rect x="338" y="519" width="85" height="85" fill="#020e1a" stroke="#2c8ae0" stroke-width="2" />
          <path d="M380 494h68v67" fill="none" stroke="#1414a0" stroke-width="1" />

          <!-- datum axes -->
          <path d="M380 476v-50M470 561h40" stroke="#1818c0" />
          <path d="M377 444l4-15 3 15zM498 558l14 3-14 4z" fill="#1010e0" />
          <text x="376" y="426" fill="#4646d0">Y</text>
          <text x="516" y="567" fill="#5a5ad0">X</text>

          <!-- sketch curves -->
          <g fill="none" stroke-width="2">
            <path d="M430 531l107-184h212l107 184-107 184H537z" stroke="#2ae62a" />
            <path d="M459 531l93-160h183l92 160-92 159H552z" stroke="#2ae62a" />
            <circle cx="643" cy="531" r="184" stroke="#0a0ae0" />
            <circle cx="1169" cy="547" r="184" stroke="#0a0ae0" />
          </g>

          <!-- work csys -->
          <path d="M380 561v-65" stroke="#3c9a46" stroke-width="4" />
          <path d="M376 499l4-19 5 19z" fill="#4aa050" />
          <path d="M380 561h65" stroke="#d83a3e" stroke-width="4" />
          <path d="M443 556l20 5-20 5z" fill="#c83034" />
          <circle cx="380" cy="562" r="4" fill="#1c5a9c" />
          <text x="376" y="477" fill="#8a949a">Y</text>
          <text x="465" y="567" fill="#983038">X</text>

          <!-- view triad -->
          <rect x="302" y="785" width="21" height="21" fill="#9c9c9e" stroke="#b4b4b4" />
          <path d="M302 804v-26" stroke="#309838" stroke-width="2" />
          <path d="M299 780l3-11 3 11z" fill="#309838" />
          <path d="M302 806h28" stroke="#c82028" stroke-width="2" />
          <path d="M327 803l11 3-11 3z" fill="#d02028" />
          <circle cx="302" cy="806" r="3" fill="#1840b0" stroke="#b8c8f0" stroke-width="2" />
          <text x="298" y="770" fill="#3c7850">Y</text>
          <text x="337" y="811" fill="#b03038">X</text>
        </svg>
      </section>
    </main>

    <footer class="taskbar">
      <button class="cloud"><svg viewBox="0 0 32 32"><rect y="2" width="32" height="30" rx="3" fill="#c8dcec" /><rect width="32" height="28" rx="3" fill="#2a8cd8" /><path d="M13 19c-5 0-5-8 0-7 1-7 9-6 10 0 6 0 5 8 0 8-4 0-5-5-10-8" fill="none" stroke="#fff" stroke-width="2" /></svg></button>
      <button><svg viewBox="0 0 32 32"><path d="M8 17h17a9 9 0 1 0-3 7" fill="none" stroke="#1878b8" stroke-width="6" /><path d="M8 17h17a9 9 0 1 0-3 7" fill="none" stroke="#68d0f8" stroke-width="4" /><path d="M6 30C-1 30 3 17 13 8 21 1 30 0 29 5" fill="none" stroke="#f0c030" stroke-width="2" /></svg></button>
      <button><svg viewBox="0 0 32 32"><rect width="32" height="32" rx="2" fill="#48a4f0" /><g fill="none" stroke="#fff" stroke-width="3"><circle cx="16" cy="11" r="4" /><circle cx="8" cy="20" r="4" /><path d="M12 20c3 6 6 5 8 0s8-5 8 3" /></g><circle cx="28" cy="25" r="2" fill="#fff" /></svg></button>
      <button class="running stacked"><svg viewBox="0 0 32 32"><circle cx="16" cy="16" r="13" fill="#50b838" stroke="#e8fce0" stroke-width="2" /><path d="M9 17h14a7 7 0 1 0-3 5" fill="none" stroke="#f0ffe8" stroke-width="4" /><path d="M4 23c5-2 9-5 12-10" fill="none" stroke="#f0ffe8" /></svg></button>
      <button class="running active"><svg><use href="#nx" /></svg></button>
      <button class="running"><svg viewBox="0 0 32 32"><rect width="32" height="32" rx="6" fill="#ff7832" /><path d="M7 11h15c4 0 4 7 0 7H8v6" fill="none" stroke="#fff" stroke-width="2" /></svg></button>
      <button class="running"><svg viewBox="0 0 32 32"><path d="M2 10l18-8 11 18-18 9z" fill="#d8dcd8" stroke="#606460" /><path d="M5 11l14-6 9 14-14 7z" fill="#2c302c" /><path d="M12 10h8v4h-8zM12 16h8v5h-8z" fill="#98a860" /></svg></button>
      <button class="running"><svg viewBox="0 0 32 32"><path d="M2 10l18-8 11 18-18 9z" fill="#d8dcd8" stroke="#606460" /><path d="M5 11l14-6 9 14-14 7z" fill="#2c302c" /><path d="M12 10h8v4h-8zM12 16h6v5h-6z" fill="#98a860" /><circle cx="24" cy="23" r="6" fill="#d81c20" stroke="#f0a0a0" /></svg></button>
    </footer>

    <!-- studio mark -->
    <div class="watermark">
      <svg viewBox="0 0 97 179">
        <path d="M84 5c-4 12-15 24-15 36 0 15 11 26 11 42 0 7-3 11-1 16l5 17 5-17c2-5-1-9-1-16 0-16 13-27 13-42S88 17 84 5z" fill="#b00408" stroke="#802030" />
        <path d="M37 89C25 79 22 70 24 63c4-13 17-17 29-13 17 6 21 26 18 41-2 11-8 16-14 15-8-1-9-14 0-14 4 0 4 4 7 3 3-5 2-22-9-23-12 0-18 6-18 17z" fill="#0820b0" stroke="#202858" />
        <text class="name" x="34" y="147" fill="#182460">月<tspan fill="#a01820">明</tspan></text>
        <text class="qq" x="1" y="174" fill="#34504c">QQ3173</text>
      </svg>
    </div>

    <svg class="pointer" viewBox="0 0 12 20"><path d="M1 1v15l4-3 3 6 2-1-3-6h5z" fill="#fff" stroke="#333" /></svg>
  </body>
</html>
```
FILE: styles.css
```
* {
  box-sizing: border-box;
}

body {
  margin: 0;
  min-height: 100vh;
  display: flex;
  flex-direction: column;
  overflow: hidden;
  position: relative;
  background-color: #e2e1e3;
  color: #000;
  font-family: "Liberation Mono", "Noto Sans CJK SC", monospace;
  font-size: 12px;
  line-height: 18px;
}

button {
  margin: 0;
  padding: 0;
  border: 0;
  background: none;
  color: inherit;
  font: inherit;
  white-space: nowrap;
}

h1,
h2,
p {
  margin: 0;
}

kbd {
  font-family: "Liberation Mono", monospace;
  font-size: 11px;
  white-space: pre;
}

.sprite {
  position: absolute;
  width: 0;
  height: 0;
}

/* ---- title and menu bar ---- */

.titlebar {
  display: flex;
  align-items: center;
  height: 24px;
  border-top: 1px solid #000;
  border-bottom: 1px solid #000;
  background: linear-gradient(#5c5a60 0, #4a484e 7px, #1c1b1c 8px, #1c1b1c 100%);
  color: #f0f0f0;
}

.titlebar h1 {
  flex: 1;
  margin-left: -6px;
  font-family: "Noto Sans", "Noto Sans CJK SC", sans-serif;
  font-size: 15px;
  font-weight: normal;
  line-height: 22px;
  white-space: nowrap;
}

.brand {
  margin-right: 16px;
  color: #fff;
  font-family: Inter, "Liberation Sans", sans-serif;
  font-size: 15px;
  font-weight: 900;
}

.menubar {
  display: flex;
  height: 22px;
  padding-top: 1px;
  background-color: #e5e4e6;
}

.menubar > button,
.menu-holder > button {
  height: 20px;
  padding: 0 5px;
  margin-right: 1px;
}

.menu-holder {
  position: relative;
  margin: 0 0 0 5px;
}

.menu-holder > .open {
  border: 1px solid #77767a;
  border-radius: 2px;
  background: linear-gradient(#dcdbdd, #b4b3b6);
}

.menu {
  position: absolute;
  z-index: 5;
  top: 20px;
  left: 0;
  width: 187px;
  padding: 2px 0;
  border: 1px solid #77777a;
  background-color: #ebebec;
}

.menu button {
  display: flex;
  align-items: center;
  width: 100%;
  height: 22px;
  padding-left: 28px;
}

.menu button svg {
  width: 18px;
  height: 18px;
  margin: 0 6px 0 -24px;
}

.menu .sub::after {
  content: "";
  margin: 0 7px 0 auto;
  border: 4px solid transparent;
  border-left-color: #000;
  border-right-width: 0;
}

.menu hr {
  height: 9px;
  margin: 0 13px 0 12px;
  border: 0;
  background: linear-gradient(#b8b8bc, #b8b8bc) 0 3px / 100% 1px no-repeat;
}

/* ---- toolbars ---- */

.toolbars {
  border-top: 1px solid #b8b7b9;
  border-bottom: 1px solid #8c8b8d;
  background: linear-gradient(#e2e1e3, #cbcacc);
  overflow: hidden;
}

.row {
  display: flex;
  height: 34px;
}

.row.last {
  height: 25px;
}

.bar {
  display: flex;
  flex: none;
  align-items: center;
  margin-right: 2px;
  border: 1px solid #f4f4f5;
  border-right-color: #bbbabc;
  border-bottom-color: #bbbabc;
  background-color: rgba(255, 255, 255, 0.15);
}

.bar.docked {
  width: 318px;
}

.bar.docked .more {
  margin-left: auto;
}

.bar.standard {
  margin-left: 16px;
}

.bar.utility {
  margin-left: 12px;
}

.bar.curve {
  margin-left: 32px;
}

.bar.assembly {
  width: 120px;
  margin-left: -8px;
}

.bar.hidden-part {
  width: 240px;
  justify-content: flex-end;
}

.bar.direct-sketch {
  margin-left: 453px;
}

.bar.curve-menu {
  margin-left: 681px;
}

.grip {
  width: 6px;
  height: 24px;
  background: repeating-linear-gradient(#aaa9ac 0 2px, transparent 2px 5px) 3px 0 / 2px 100% no-repeat;
}

.sep {
  width: 2px;
  height: 30px;
  margin: 0 2px;
  border-left: 1px solid #bbbabc;
  border-right: 1px solid #f4f4f5;
}

.tool {
  display: flex;
  flex: none;
  align-items: center;
  gap: 3px;
  width: 31px;
  padding-left: 4px;
}

.tool.labelled {
  width: auto;
  padding-right: 3px;
}

.tool svg {
  flex: none;
  width: 24px;
  height: 24px;
}

.caret {
  display: flex;
  flex: none;
  flex-direction: column;
  align-items: center;
  width: 12px;
}

.caret::after {
  content: "";
  border: 3px solid transparent;
  border-top-color: #000;
  border-bottom-width: 0;
}

.caret.more {
  align-self: flex-end;
  padding-bottom: 7px;
}

.caret.overflow {
  gap: 5px;
  font-size: 16px;
  line-height: 12px;
}

.bar .text {
  padding: 0 1px 0 4px;
}

/* ---- selection bar and prompt ---- */

.selection-bar {
  display: flex;
  align-items: center;
  height: 26px;
  background: linear-gradient(#c4c3c5, #dcdbdd);
}

.filters {
  display: flex;
  gap: 9px;
  width: 295px;
}

.filters select {
  height: 17px;
  padding: 0;
  border: 1px solid #77767a;
  background-color: #fff;
  font: inherit;
  line-height: 15px;
}

.filters .filter {
  width: 36px;
  appearance: none;
  border-left: 0;
  background: linear-gradient(45deg, transparent 50%, #111 50%) 22px 5px / 5px 5px no-repeat,
    linear-gradient(-45deg, transparent 50%, #111 50%) 27px 5px / 5px 5px no-repeat,
    linear-gradient(90deg, #fff 18px, #7fa8e0 18px);
}

.filters .scope {
  width: 200px;
  appearance: none;
}

.snap {
  display: flex;
  align-items: center;
  justify-content: center;
  width: 23px;
  height: 22px;
  border: 1px solid transparent;
  border-radius: 2px;
}

.snap.on {
  border-color: #555;
  background-color: #fff;
}

.snap svg {
  width: 17px;
  height: 17px;
}

.prompt-bar {
  display: flex;
  height: 22px;
  border-top: 1px solid #f6f6f7;
  border-bottom: 1px solid #8c8b8d;
  background-color: #dad9db;
}

.prompt-bar .cue {
  width: 671px;
  border-right: 1px solid #f6f6f7;
  font-weight: bold;
  line-height: 19px;
}

.prompt-bar .status {
  flex: 1;
  border-right: 1px solid #f6f6f7;
}

.prompt-bar .end {
  width: 17px;
}

/* ---- part navigator ---- */

.workspace {
  display: flex;
  flex: 1;
}

.navigator {
  display: flex;
  flex: none;
  flex-direction: column;
  width: 251px;
  padding: 0 9px 6px 0;
  border-right: 2px solid #707072;
  background-color: #ebeaeb;
}

.navigator h2 {
  height: 35px;
  margin-left: -8px;
  font-size: 13px;
  line-height: 40px;
}

.tree {
  display: flex;
  flex: 1;
  flex-direction: column;
  border: 1px solid #808082;
  border-left: 0;
}

.tree-head {
  height: 17px;
  padding-left: 8px;
  border-bottom: 1px solid #a0a0a2;
  background: linear-gradient(#f2f2f3, #d4d3d5);
  font-size: 16px;
  line-height: 15px;
}

.tree-body {
  flex: 1;
  background: linear-gradient(#dcdce0, #dcdce0) 163px 0 / 1px 100% no-repeat,
    repeating-linear-gradient(#fff 0 19px, #e2e1e6 19px 20px, #f6f5f8 20px 39px, #e2e1e6 39px 40px);
}

.tree table {
  width: 100%;
  border-collapse: collapse;
  table-layout: fixed;
}

.tree td {
  height: 20px;
  padding: 0 0 0 2px;
  color: #333;
  overflow: hidden;
  white-space: nowrap;
}

.tree td svg {
  width: 16px;
  height: 16px;
  margin-right: 2px;
  vertical-align: middle;
}

.tree td > svg {
  margin-left: -3px;
}

.tree td svg.picked {
  outline: 1px dashed #2080c0;
  background-color: #90c8e8;
}

.tree input {
  appearance: none;
  width: 12px;
  height: 12px;
  margin: 0 2px;
  border: 1px solid #000;
  background-color: #fff;
  vertical-align: middle;
}

.tree input:checked::before {
  content: "";
  display: block;
  width: 5px;
  height: 9px;
  margin: 0 0 0 3px;
  border: solid #18a030;
  border-width: 0 3px 3px 0;
  transform: rotate(40deg);
}

.scrollbar {
  display: flex;
  height: 16px;
  background-color: #f2f1f3;
}

.scrollbar .thumb {
  width: 199px;
  background-color: #cccbcd;
}

.scrollbar .arrow {
  margin: 0 4px 0 auto;
  font-size: 20px;
  line-height: 14px;
}

.splitter {
  display: flex;
  align-items: center;
  gap: 4px;
  height: 13px;
}

.splitter::before,
.splitter::after {
  content: "";
  width: 71px;
  border-top: 1px solid #b0afb1;
}

.splitter::after {
  flex: 1;
}

.splitter span {
  width: 50px;
  height: 6px;
  border: 1px solid #a0a0a2;
  border-top-color: #fff;
  border-left-color: #fff;
  background-color: #d4d3d5;
}

.section {
  display: flex;
  align-items: center;
  height: 23px;
  border-bottom: 1px solid #8c8b8d;
  border-right: 1px solid #8c8b8d;
  background: linear-gradient(#f4f4f5 50%, #d8d7d9 60%);
}

.section b {
  flex: 1;
  margin-left: -6px;
  font-size: 13px;
  text-align: left;
}

.section svg {
  flex: none;
  width: 23px;
  height: 22px;
  padding: 6px 5px;
  border-left: 1px solid #8c8b8d;
  fill: none;
  stroke: #555;
  stroke-width: 2px;
}

/* ---- graphics window ---- */

.viewport {
  flex: 1;
  min-width: 0;
  background-color: #000;
}

.viewport svg {
  display: block;
  width: 100%;
}

.viewport text {
  font-family: "Liberation Sans", sans-serif;
  font-size: 12px;
}

/* ---- taskbar ---- */

.taskbar {
  display: flex;
  height: 40px;
  background: linear-gradient(90deg, #54806f, #507a6c 50%, #5a8478);
}

.taskbar button {
  display: flex;
  align-items: center;
  justify-content: center;
  width: 62px;
}

.taskbar .cloud {
  width: 32px;
  margin-left: -15px;
  margin-right: 15px;
}

.taskbar svg {
  width: 32px;
  height: 32px;
}

.taskbar .running {
  width: 58px;
  margin: 1px 4px 1px 0;
  border: 1px solid #98b4aa;
  background-color: #6c9486;
}

.taskbar .stacked {
  width: 51px;
  margin: 1px 11px 1px 2px;
  box-shadow: 2px 0 0 #50786a, 3px 0 0 #98b4aa, 6px 0 0 #50786a, 7px 0 0 #98b4aa;
}

.taskbar .active {
  border-color: #e8f4f0;
  background: linear-gradient(135deg, #c0d0c8, #88a89c);
}

/* ---- overlays ---- */

.watermark {
  position: absolute;
  right: 0;
  bottom: 0;
  width: 97px;
  height: 179px;
  background-color: rgba(232, 228, 232, 0.58);
}

.watermark svg {
  display: block;
}

.watermark .name {
  font-family: "Noto Sans CJK TC", serif;
  font-size: 34px;
}

.watermark .qq {
  font-family: "Liberation Serif", serif;
  font-size: 27px;
}

.pointer {
  position: absolute;
  z-index: 6;
  top: 284px;
  left: 222px;
  width: 12px;
  height: 20px;
}
```
